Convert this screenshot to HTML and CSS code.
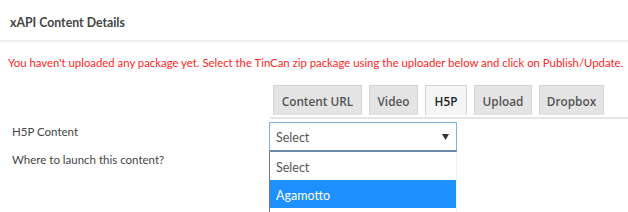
FILE: index.html
```html
<!DOCTYPE html>
<html>
<head>
<meta charset="utf-8">
<link rel="stylesheet" href="styles.css">
</head>
<body>
<div class="box">
  <div class="box-header">xAPI Content Details</div>
  <div class="notice">You haven't uploaded any package yet. Select the TinCan zip package using the uploader below and click on Publish/Update.</div>
  <div class="tabs-row">
    <div class="tabs">
      <div class="tab w-url">Content URL</div>
      <div class="tab w-video">Video</div>
      <div class="tab w-h5p active">H5P</div>
      <div class="tab w-upload">Upload</div>
      <div class="tab w-dropbox">Dropbox</div>
    </div>
  </div>
  <div class="form-row">
    <div class="label">H5P Content</div>
    <div class="field">
      <div class="select">
        <span>Select</span>
        <svg class="arrow" width="7" height="6" viewBox="0 0 7 6"><path d="M0 0H7L3.5 6Z" fill="#333"/></svg>
      </div>
      <div class="dropdown">
        <div class="option">Select</div>
        <div class="option selected">Agamotto</div>
      </div>
    </div>
  </div>
  <div class="form-row second">
    <div class="label">Where to launch this content?</div>
  </div>
</div>
</body>
</html>
```
FILE: styles.css
```css
* { box-sizing: border-box; }
html, body { margin: 0; padding: 0; background: #fff; }
body {
  font-family: Lato, "Open Sans", sans-serif;
  font-size: 12px;
  color: #444;
  width: 628px;
  height: 212px;
  overflow: hidden;
}
.box-header {
  height: 42px;
  padding: 15px 0 0 10px;
  font-size: 12.3px;
  font-weight: 700;
  color: #444;
  border-bottom: 2px solid #eee;
}
.notice {
  color: #ff2525;
  font-size: 11.35px;
  padding: 14px 0 0 8px;
  height: 41px;
  white-space: nowrap;
}
.tabs-row {
  margin-left: 270px;
  border-bottom: 2px solid #e5e5e5;
  padding-left: 3px;
  height: 36px;
  padding-top: 2px;
}
.tabs { display: flex; gap: 7px; }
.tab {
  height: 30px;
  display: flex;
  align-items: center;
  justify-content: center;
  white-space: nowrap;
  background: #e4e4e4;
  border: 1px solid #d4d4d4;
  border-bottom: none;
  font-family: "Open Sans", Lato, sans-serif;
  font-size: 11.8px;
  font-weight: 600;
  color: #555;
  padding-top: 1px;
}
.w-url { width: 89px; }
.w-video { width: 49px; }
.w-h5p { width: 42px; }
.w-upload { width: 58px; }
.w-dropbox { width: 65px; }
.tab.active {
  background: #f5f5f5;
  color: #222;
}
.form-row {
  display: flex;
  padding-left: 12px;
  position: relative;
}
.label {
  width: 257px;
  font-size: 11.5px;
  color: #444;
  padding-top: 6px;
}
.field { position: relative; margin-top: 3px; }
.select {
  width: 188px;
  height: 30px;
  border: 1px solid #7fb2e0;
  border-bottom: 2px solid #6a8aa8;
  display: flex;
  align-items: center;
  justify-content: space-between;
  padding: 2px 7px 0 6px;
  font-size: 12.5px;
  color: #555;
}
.arrow { display: block; margin-top: -2px; }
.dropdown {
  position: absolute;
  top: 30px;
  left: 0;
  width: 188px;
  background: #fff;
  border-left: 1px solid #777;
  border-right: 1px solid #eee;
  z-index: 2;
  height: 60px;
}
.option {
  height: 28px;
  padding: 2px 6px 0;
  display: flex;
  align-items: center;
  font-size: 12.5px;
  color: #555;
}
.option.selected {
  background: #1e90ff;
  color: #fff;
}
.form-row.second .label { padding-top: 1px; }
```
